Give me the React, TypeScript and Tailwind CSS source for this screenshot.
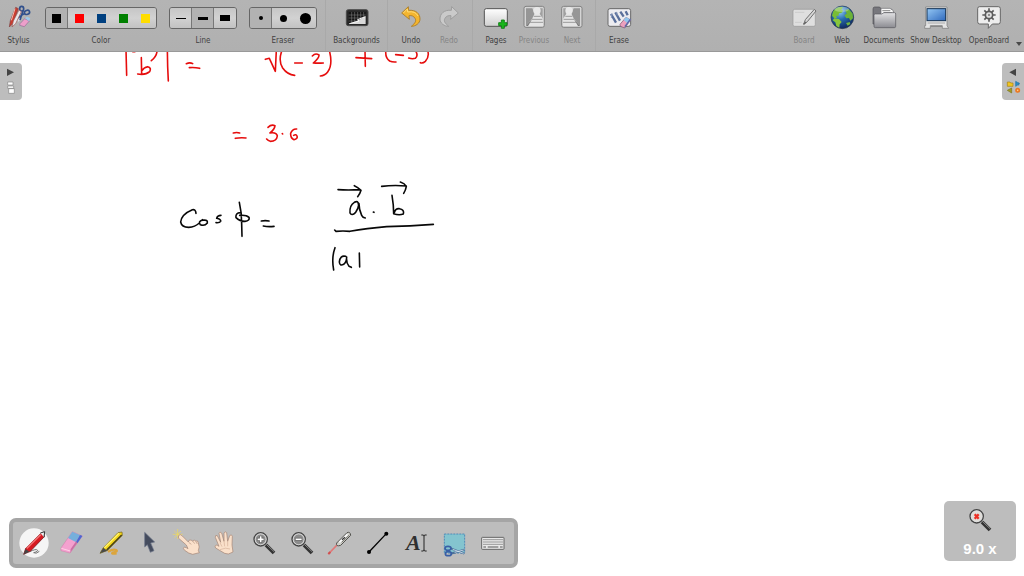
import type { ReactNode } from "react";

type ToolProps = { label: string; width: string; dim?: boolean; children: ReactNode };

/* Toolbar button: drawing on top, caption below */
function Tool({ label, width, dim, children }: ToolProps) {
  return (
    <button
      type="button"
      disabled={dim}
      className={`flex h-full shrink-0 flex-col items-center pt-1 ${width} ${dim ? "text-[#858585]" : "text-[#414141]"}`}
    >
      {children}
      <Caption>{label}</Caption>
    </button>
  );
}

function Caption({ children }: { children: ReactNode }) {
  return <span className="mt-[5px] text-[8px] leading-3 whitespace-nowrap">{children}</span>;
}

/* Toolbar drawings use three units per pixel */
function TopIcon({ children, dim }: { children: ReactNode; dim?: boolean }) {
  return (
    <svg aria-hidden="true" viewBox="0 0 90 78" className={`h-[26px] w-[30px] shrink-0 ${dim ? "opacity-70" : ""}`}>
      {children}
    </svg>
  );
}

function Choices({ label, items, active }: { label: string; active: number; items: { name: string; mark: ReactNode }[] }) {
  return (
    <div role="group" aria-label={label} className="flex h-full shrink-0 flex-col items-center pt-[7px] text-[#414141]">
      <div className="flex h-[22px] overflow-hidden rounded-[3px] border border-[#666]">
        {items.map((item, i) => (
          <button
            key={item.name}
            type="button"
            aria-label={item.name}
            aria-pressed={i === active}
            className={`flex w-[22px] items-center justify-center ${
              i === active ? "bg-[#b2b2b2]" : "bg-linear-to-b from-[#c6c6c6] via-[#d2d2d2] to-[#c2c2c2]"
            } ${i === active || i === active - 1 ? "border-r border-[#777]" : ""}`}
          >
            {item.mark}
          </button>
        ))}
      </div>
      <span className="mt-[6px] text-[8px] leading-3">{label}</span>
    </div>
  );
}

function Separator() {
  return <div className="h-full w-px shrink-0 bg-[#a9a9a9]" />;
}

const colors = [
  { name: "Black", mark: <span className="size-[9px] bg-black" /> },
  { name: "Red", mark: <span className="size-[9px] bg-[#ff0000]" /> },
  { name: "Blue", mark: <span className="size-[9px] bg-[#004080]" /> },
  { name: "Green", mark: <span className="size-[9px] bg-[#008000]" /> },
  { name: "Yellow", mark: <span className="size-[9px] bg-[#ffdd00]" /> },
];
const lines = [
  { name: "Fine line", mark: <span className="h-px w-[10px] bg-black" /> },
  { name: "Medium line", mark: <span className="h-[3px] w-[10px] bg-black" /> },
  { name: "Strong line", mark: <span className="h-[6px] w-[10px] bg-black" /> },
];
const erasers = [
  { name: "Small eraser", mark: <span className="size-1 rounded-full bg-black" /> },
  { name: "Medium eraser", mark: <span className="size-[7px] rounded-full bg-black" /> },
  { name: "Large eraser", mark: <span className="size-[11px] rounded-full bg-black" /> },
];

function StylusIcon() {
  return (
    <TopIcon>
      <path d="M42 52 L58 26" stroke="#d8dce6" strokeWidth="5" />
      <g fill="none" stroke="#31508c" strokeWidth="5">
        <ellipse cx="53" cy="14" rx="6" ry="7" />
        <ellipse cx="69" cy="25" rx="8" ry="6" transform="rotate(-20 69 25)" />
        <path d="M57 20 L48 48 M62 28 L39 43" />
      </g>
      <path d="M35 10 L43 14 L28 57 L16 69 L19 50Z" fill="#c93d30" stroke="#7d4444" strokeWidth="2" />
      <path d="M33 14 L22 49" stroke="#f5b8ac" strokeWidth="3" />
      <path d="M45 18 L52 23 L35 59 L24 69 L28 51Z" fill="#e9e9ed" stroke="#9b5550" strokeWidth="2" />
      <path d="M48 59 L62 44 L76 51 L61 68 L47 64Z" fill="#ed9fca" stroke="#8f6d96" strokeWidth="2" />
      <path d="M63 43 L69 38 L79 43 L75 52Z" fill="#9cc8ea" />
    </TopIcon>
  );
}

function BackgroundsIcon() {
  return (
    <TopIcon>
      <rect x="13" y="17" width="65" height="48" rx="6" fill="#292929" stroke="#4c4c4c" strokeWidth="3" />
      <rect x="20" y="24" width="51" height="34" fill="#151515" />
      <path d="M20 33H71 M20 42H71 M20 51H71 M29 24V58 M38 24V58 M47 24V58 M56 24V58 M65 24V58" stroke="#8b8b8b" strokeWidth="1.5" />
      <path d="M20 60 L45 51 L71 37 V60Z" fill="#d9d9d9" />
      <path d="M22 59 L51 51 L47 47 L70 38" fill="none" stroke="#f8f8f8" strokeWidth="3" />
    </TopIcon>
  );
}

function TurnIcon({ redo }: { redo?: boolean }) {
  return (
    <TopIcon>
      <path
        transform={redo ? "translate(90 0) scale(-1 1)" : undefined}
        d="M17 27 L37 8 L38 19 C60 17 72 29 72 45 C72 58 59 67 46 67 C57 58 62 51 57 43 C53 36 47 34 39 35 L40 46Z"
        fill={redo ? "#cacaca" : "#f4b52e"}
        stroke={redo ? "#989898" : "#a87924"}
        strokeWidth="2.5"
        strokeLinejoin="round"
      />
      {!redo && <path d="M22 27 L34 15 L35 24 Q58 20 66 36" fill="none" stroke="#ffdc77" strokeWidth="3" />}
    </TopIcon>
  );
}

function PagesIcon() {
  return (
    <TopIcon>
      <defs>
        <linearGradient id="pageFill" x2="0" y2="1">
          <stop stopColor="#fff" />
          <stop offset="1" stopColor="#cfcfcf" />
        </linearGradient>
      </defs>
      <rect x="10" y="14" width="69" height="53" rx="6" fill="url(#pageFill)" stroke="#555" strokeWidth="3" />
      <path d="M61 48 h9 v8 h8 v9 h-8 v8 h-9 v-8 h-8 v-9 h8Z" fill="#18b51b" stroke="#087c0c" strokeWidth="2.5" strokeLinejoin="round" />
    </TopIcon>
  );
}

function StairIcon({ next }: { next?: boolean }) {
  return (
    <TopIcon dim>
      <g transform={next ? "translate(90 0) scale(-1 1)" : undefined}>
        <rect x="15" y="7" width="61" height="63" rx="6" fill="#e4e4e4" stroke="#6e6e6e" strokeWidth="3" />
        <path d="M21 13 H40 L47 29 L39 44 L21 66Z" fill="#8a8a8a" />
        <path d="M21 66 L44 40 L36 55 L31 66Z" fill="#5f5f5f" />
        <path d="M63 13 H71 V43 L62 30Z" fill="#999" />
        <path d="M48 28 L62 30 L72 47 V66 H27 L41 43Z" fill="#fafafa" />
        <circle cx="54" cy="20" r="11" fill="#fff" />
        <path d="M44 37H65 M39 46H70 M33 55H72" stroke="#929292" strokeWidth="3" />
      </g>
    </TopIcon>
  );
}

function EraseIcon() {
  return (
    <TopIcon>
      <rect x="12" y="14" width="68" height="53" rx="6" fill="#ececf0" stroke="#686868" strokeWidth="3" />
      <path d="M21 30 L36 56 M34 25 L48 50 M49 23 L59 38 M65 22 L71 34" stroke="#596f9b" strokeWidth="7" />
      <path d="M24 28 L22 42 M38 24 L40 34" stroke="#899abb" strokeWidth="3" />
      <path d="M48 61 L66 40 L80 48 L62 72 L49 67Z" fill="#eca0bd" stroke="#79506f" strokeWidth="2" />
      <path d="M59 48 L66 39 L80 47 L72 59Z" fill="#91c6ed" />
      <path d="M80 48 L62 72 V65 L79 43Z" fill="#5965a9" />
    </TopIcon>
  );
}

function BoardIcon() {
  return (
    <TopIcon dim>
      <rect x="12" y="16" width="67" height="51" rx="5" fill="#f2f2f2" stroke="#8c8c8c" strokeWidth="2" />
      <path d="M18 25H46 M18 55H38" stroke="#d8d8d8" strokeWidth="3" />
      <path d="M44 61 L49 47 L76 16 L81 21 L55 53Z" fill="#e5e5e5" stroke="#555" strokeWidth="3" />
      <path d="M44 61 L51 54" stroke="#444" strokeWidth="4" />
    </TopIcon>
  );
}

function WebIcon() {
  return (
    <TopIcon>
      <defs>
        <radialGradient id="sea" cx="40%" cy="25%" r="75%">
          <stop stopColor="#90cbed" />
          <stop offset=".45" stopColor="#286db0" />
          <stop offset="1" stopColor="#10295f" />
        </radialGradient>
      </defs>
      <circle cx="46" cy="40" r="34" fill="url(#sea)" stroke="#29394c" strokeWidth="2" />
      <path d="M19 22 C27 9 40 8 48 10 L43 17 L49 20 L43 27 L36 28 L34 36 L27 35 L30 42 L22 43 L15 35Z" fill="#79bd35" />
      <path d="M22 43 L36 45 L44 54 L38 61 L37 71 L28 66 L25 55 L17 49Z" fill="#88c63b" />
      <path d="M55 18 L65 15 L77 29 L78 43 L70 50 L66 42 L58 43 L52 34 L59 29Z" fill="#6cb338" />
      <path d="M57 57 L68 54 L70 60 L62 65Z" fill="#70b640" />
      <ellipse cx="44" cy="16" rx="22" ry="8" fill="white" opacity=".3" />
    </TopIcon>
  );
}

function DocumentsIcon() {
  return (
    <TopIcon>
      <defs>
        <linearGradient id="folder" x2="0" y2="1">
          <stop stopColor="#e2e2e4" />
          <stop offset="1" stopColor="#8b8b91" />
        </linearGradient>
      </defs>
      <path d="M12 15 Q12 9 17 9 H32 L38 16 H68 V60 H12Z" fill="#77777d" stroke="#4f4f55" strokeWidth="2" />
      <path d="M36 13 H63 L73 20 V49 H36Z" fill="#fafafa" stroke="#69696e" strokeWidth="2" />
      <path d="M40 20H64 M44 26H70" stroke="#888" strokeWidth="3" />
      <path d="M15 34 Q15 30 19 30 H38 L45 26 H77 Q80 26 80 30 V67 Q80 71 76 71 H19 Q15 71 15 67Z" fill="url(#folder)" stroke="#55555b" strokeWidth="2" />
    </TopIcon>
  );
}

function DesktopIcon() {
  return (
    <TopIcon>
      <defs>
        <linearGradient id="screen" x2="1" y2="1">
          <stop stopColor="#94c7f4" />
          <stop offset="1" stopColor="#2f69bd" />
        </linearGradient>
      </defs>
      <path d="M14 9 H78 V65 L83 73 H64 V65 H28 V73 H11 V65 H14Z" fill="#e4e4e4" stroke="#777" strokeWidth="2" />
      <rect x="18" y="14" width="56" height="36" fill="url(#screen)" stroke="#143253" strokeWidth="3" />
      <path d="M20 57H72" stroke="#aaa" strokeWidth="3" />
      <path d="M29 67H63" stroke="#888" strokeWidth="4" />
    </TopIcon>
  );
}

function OpenBoardIcon() {
  return (
    <TopIcon>
      <path d="M17 8 H73 Q79 8 79 14 V53 Q79 60 73 60 H55 L43 73 V60 H17 Q11 60 11 53 V14 Q11 8 17 8Z" fill="#ededed" stroke="#666" strokeWidth="3" />
      <g stroke="#5b5b5b" strokeWidth="5">
        <path d="M45 13V22 M45 44V53 M25 33H34 M56 33H65 M31 19L37 25 M53 41L59 47 M31 47L37 41 M53 25L59 19" />
        <circle cx="45" cy="33" r="11" fill="#dedede" strokeWidth="5" />
      </g>
      <circle cx="45" cy="33" r="3" fill="#777" />
    </TopIcon>
  );
}

function Magnifier({ sign }: { sign: "in" | "out" | "reset" }) {
  return (
    <>
      <path d="M51 51 L75 75" stroke="#333" strokeWidth="11" strokeLinecap="butt" />
      <path d="M53 50 L75 71" stroke="#888" strokeWidth="3" />
      <circle cx="35" cy="34" r="20" fill="#cfcfcf" stroke="#444" strokeWidth="4" />
      <circle cx="35" cy="34" r="16" fill={sign === "reset" ? "#e1ded9" : "#8c8c8c"} stroke="#e3e3e3" strokeWidth="2" />
      {sign === "reset" ? (
        <path d="M29 28 L41 41 M41 28 L29 41" stroke="#ed2f24" strokeWidth="7" />
      ) : (
        <>
          <path d={sign === "in" ? "M25 34H45 M35 24V44" : "M25 34H45"} stroke="#555" strokeWidth="9" />
          <path d={sign === "in" ? "M26 34H44 M35 25V43" : "M26 34H44"} stroke="#fff" strokeWidth="5" />
        </>
      )}
    </>
  );
}

const hand = {
  fill: "#fae0ca",
  stroke: "#a48473",
  strokeWidth: 2,
  strokeLinejoin: "round" as const,
};

const palette: { name: string; art: ReactNode }[] = [
  {
    name: "Pen",
    art: (
      <>
        <circle cx="45" cy="45" r="44" fill="#f5f5f5" />
        <path d="M32 71 Q51 62 55 66 T44 74 Q51 79 61 70" fill="none" stroke="#737373" strokeWidth="3" />
        <path d="M20 61 L64 17 L74 14 L76 26 L34 70 L14 79Z" fill="#d71920" stroke="#671016" strokeWidth="2" />
        <path d="M23 61 L65 20" stroke="#f06f70" strokeWidth="5" />
        <path d="M31 71 L14 79 L20 63Z" fill="#454545" />
        <path d="M64 15 L77 11 L75 28" fill="#eee" stroke="#333" strokeWidth="3" />
      </>
    ),
  },
  {
    name: "Eraser",
    art: (
      <>
        <path d="M12 60 L46 11 L76 24 L39 75 L12 68Z" fill="#f4a1cf" stroke="#d079a8" strokeWidth="1.5" />
        <path d="M33 30 L46 11 L76 24 L62 45Z" fill="#76afdb" />
        <path d="M76 24 L39 75 L41 63 L70 22Z" fill="#ca70a4" />
        <path d="M76 24 L61 46 L58 41 L69 21Z" fill="#4b68d4" />
        <path d="M13 61 L40 69" stroke="#ffd1e7" strokeWidth="3" />
      </>
    ),
  },
  {
    name: "Highlighter",
    art: (
      <>
        <path d="M36 71 Q52 62 60 66 T50 74 Q44 79 62 76" fill="none" stroke="#dca53c" strokeWidth="7" />
        <path d="M22 59 L66 14 L78 12 L79 22 L35 67 L12 76Z" fill="#f3d51a" stroke="#716013" strokeWidth="2" />
        <path d="M25 59 L69 16" stroke="#fff36e" strokeWidth="4" />
        <path d="M32 66 L77 21" stroke="#433c19" strokeWidth="4" />
        <path d="M22 59 L34 68 L12 76Z" fill="#494949" />
      </>
    ),
  },
  {
    name: "Select",
    art: <path d="M32 13 L62 42 L50 45 L60 68 L49 73 L40 50 L32 57Z" fill="#454c5e" stroke="#70798c" strokeWidth="2" />,
  },
  {
    name: "Interact",
    art: (
      <>
        <path d="M17 3V33 M2 19H32 M7 9L27 29 M27 9L7 29" stroke="#f0db57" strokeWidth="2" />
        <path
          {...hand}
          d="M20 23 Q24 16 31 24 L49 42 Q50 34 57 36 L62 39 Q66 33 71 39 Q78 36 79 45 Q84 57 79 68 L82 74 L62 79 Q50 77 38 67 Q31 61 37 57 Q44 59 48 62 L43 51 L19 30Z"
        />
        <path d="M50 43L58 49 M62 39L68 47 M71 40L76 48" stroke="#b69684" strokeWidth="2" />
      </>
    ),
  },
  {
    name: "Scroll page",
    art: (
      <>
        <path
          {...hand}
          d="M27 55 L16 28 Q16 19 22 23 L32 43 L27 16 Q29 9 35 15 L42 40 L42 15 Q45 8 50 14 L53 40 L59 23 Q65 17 67 25 L66 51 L69 72 L55 78 L44 76 L17 60 Q12 52 21 51Z"
        />
        <path d="M30 44L36 56 M42 40L44 55 M53 40L53 55 M30 65Q48 57 60 63" fill="none" stroke="#d4b199" strokeWidth="2" />
      </>
    ),
  },
  { name: "Zoom in", art: <Magnifier sign="in" /> },
  { name: "Zoom out", art: <Magnifier sign="out" /> },
  {
    name: "Laser pointer",
    art: (
      <>
        <path d="M10 78 L40 47" stroke="#e17878" strokeWidth="5" />
        <path d="M10 78 L16 72" stroke="#d05050" strokeWidth="6" />
        <path d="M35 45 L66 14 Q76 10 77 22 L47 52 Q32 57 35 45Z" fill="#d0d0ca" stroke="#51514d" strokeWidth="3" />
        <path d="M43 43 L67 19" stroke="#fafafa" strokeWidth="5" />
        <path d="M50 43 L73 21" stroke="#71716c" strokeWidth="3" />
        <path d="M51 35 L60 28" stroke="#333" strokeWidth="4" />
      </>
    ),
  },
  {
    name: "Draw line",
    art: (
      <>
        <path d="M18 72 L70 17" stroke="#000" strokeWidth="4" />
        <circle cx="18" cy="72" r="6" />
        <circle cx="70" cy="17" r="6" />
      </>
    ),
  },
  { name: "Write text", art: null },
  {
    name: "Capture part of the screen",
    art: (
      <>
        <rect x="13" y="18" width="61" height="57" fill="#84c4cf" stroke="#3f7fb5" strokeWidth="2.5" strokeDasharray="6 3" />
        <path d="M32 61 L73 77 M32 77 L73 65" stroke="#4b6f97" strokeWidth="6" />
        <path d="M38 64 L71 76 M44 73 L71 66" stroke="#d6e7f2" strokeWidth="2.5" />
        <g fill="none" stroke="#395fa5" strokeWidth="5">
          <ellipse cx="24" cy="61" rx="9" ry="6" />
          <ellipse cx="25" cy="77" rx="9" ry="6" />
        </g>
      </>
    ),
  },
  {
    name: "Virtual keyboard",
    art: (
      <>
        <rect x="11" y="28" width="67" height="36" rx="2" fill="#e8e8e8" stroke="#666" strokeWidth="3" />
        <path d="M16 35H74 M16 42H74 M16 49H74" stroke="#707070" strokeWidth="3" strokeDasharray="4 2" />
        <path d="M16 57H24 M29 57H61 M66 57H74" stroke="#888" strokeWidth="4" />
      </>
    ),
  },
];

/* Pen strokes written on the page */
function Handwriting() {
  return (
    <svg role="img" aria-label="Handwritten vector formula" viewBox="0 52 480 240" className="absolute top-0 left-0 h-[240px] w-[480px]" fill="none" strokeLinecap="round" strokeLinejoin="round">
      <g transform="translate(110 45) scale(.33333)" stroke="#e60d0d" strokeWidth="4.8">
        <path d="M48 14 L50 91 M68 20 L75 20 M94 38 L95 88 M83 87 Q107 91 119 80 Q125 68 113 65 Q101 67 96 77 M141 20 Q139 35 124 47 M172 14 L173 65 L175 108 M229 56 Q240 51 248 56 M238 68 Q252 66 269 70" />
        <path d="M466 43 L478 40 L496 79 L499 16 M516 16 Q504 47 518 69 Q532 89 554 91 M554 54 H577 M607 33 Q616 23 627 30 Q628 39 610 54 Q625 55 640 54 M657 13 Q670 58 653 81 Q645 92 631 93 M738 38 L785 41 M765 16 L766 64 M828 14 Q824 38 839 48 Q847 52 858 51 M857 29 L880 31 M918 20 Q925 33 916 40 Q907 43 896 39 M952 14 Q960 34 946 49 Q938 56 931 53" />
        <path d="M370 264 Q380 261 389 264 M376 280 Q392 277 408 279 M474 247 Q484 237 495 242 Q494 253 480 264 Q500 261 502 273 Q500 289 481 289 Q474 287 470 282 M517 266 L518 267 M560 252 Q547 251 542 265 Q541 280 552 284 Q564 281 561 273 Q558 267 551 271" />
      </g>
      <g transform="translate(170 170) scale(.33333)" stroke="#080808" strokeWidth="4.8">
        <path d="M78 130 Q77 117 67 119 Q34 133 32 156 Q35 172 56 172 Q75 171 88 159 M98 149 Q83 155 91 164 Q104 169 112 159 Q114 148 99 151 M153 136 Q142 136 140 145 Q154 148 152 154 Q149 159 138 158" />
        <path d="M208 97 Q215 126 215 161 L216 199 M211 128 Q196 128 198 143 Q209 154 225 154 Q240 152 237 142 Q229 134 209 136 M274 153 Q286 151 297 153 M280 168 Q295 171 312 169" />
        <path d="M504 59 Q534 61 570 59 M553 47 Q563 51 573 61 Q570 72 563 80 M565 103 Q565 91 553 97 Q538 106 540 129 Q545 139 557 127 Q565 116 567 101 Q567 118 575 136 Q578 143 586 144 M610 126 L612 127 M635 49 Q671 45 709 48 M691 36 Q704 40 709 49 Q707 61 701 70 M666 76 Q671 105 671 131 Q687 137 700 132 Q704 119 688 116 Q676 115 673 128" />
        <path d="M494 180 L498 184 Q519 182 540 184 Q590 175 650 170 Q720 169 790 163 M495 233 Q484 263 491 300 M527 259 Q510 255 508 276 Q509 289 521 283 Q530 276 530 261 Q528 279 537 289 L544 292 M568 249 L569 291" />
      </g>
    </svg>
  );
}

export default function App() {
  return (
    <div className="flex h-screen flex-col overflow-hidden bg-white font-['DejaVu_Sans_Condensed','DejaVu_Sans',sans-serif]">
      <header className="flex h-[52px] shrink-0 justify-between border-b border-[#999] bg-linear-to-b from-[#b4b4b4] to-[#b0b0b0]">
        <div className="flex">
          <Tool label="Stylus" width="w-[37px]"><StylusIcon /></Tool>
          <div className="flex gap-3 px-2">
            <Choices label="Color" items={colors} active={0} />
            <Choices label="Line" items={lines} active={1} />
            <Choices label="Eraser" items={erasers} active={0} />
          </div>
          <Separator />
          <Tool label="Backgrounds" width="w-[61px]"><BackgroundsIcon /></Tool>
          <Separator />
          <div className="flex px-1">
            <Tool label="Undo" width="w-[38px]"><TurnIcon /></Tool>
            <Tool label="Redo" width="w-[38px]" dim><TurnIcon redo /></Tool>
          </div>
          <Separator />
          <div className="flex px-1">
            <Tool label="Pages" width="w-[38px]"><PagesIcon /></Tool>
            <Tool label="Previous" width="w-[38px]" dim><StairIcon /></Tool>
            <Tool label="Next" width="w-[38px]" dim><StairIcon next /></Tool>
          </div>
          <Separator />
          <div className="flex px-1">
            <Tool label="Erase" width="w-[38px]"><EraseIcon /></Tool>
          </div>
        </div>
        <div className="flex">
          <Tool label="Board" width="w-[38px]" dim><BoardIcon /></Tool>
          <Tool label="Web" width="w-[38px]"><WebIcon /></Tool>
          <Tool label="Documents" width="w-[46px]"><DocumentsIcon /></Tool>
          <Tool label="Show Desktop" width="w-[58px]"><DesktopIcon /></Tool>
          <Tool label="OpenBoard" width="w-[48px]"><OpenBoardIcon /></Tool>
          <button type="button" aria-label="More" className="flex w-[11px] items-end justify-center pb-[5px]">
            <svg aria-hidden="true" viewBox="0 0 6 4" className="h-1 w-1.5"><path d="M0 0H6L3 4Z" fill="#484848" /></svg>
          </button>
        </div>
      </header>

      <main className="relative flex min-h-0 flex-1 flex-col justify-between">
        <Handwriting />
        <div className="relative flex justify-between pt-[11px]">
          <button type="button" aria-label="Open page list" className="h-[37px] w-[22px] rounded-r-[4px] bg-[#bdbdbd]">
            <svg aria-hidden="true" viewBox="0 0 66 111" className="h-[37px] w-[22px]">
              <path d="M21 17 L42 28 L21 39Z" fill="#444" />
              <path d="M23 57H39V66H23Z M23 69H41V76H23Z M26 77H43V91H26Z" fill="#fff" stroke="#858585" strokeWidth="2" />
            </svg>
          </button>
          <button type="button" aria-label="Open library" className="h-[37px] w-[22px] rounded-l-[4px] bg-[#bdbdbd]">
            <svg aria-hidden="true" viewBox="0 0 66 111" className="h-[37px] w-[22px]">
              <path d="M42 17 L22 28 L42 39Z" fill="#444" />
              <path d="M16 57H24L26 60H33V70H16Z" fill="#f0c51f" stroke="#a68216" strokeWidth="2" />
              <path d="M41 55 L53 62 L41 70Z M50 58V68" fill="#2c8bc2" stroke="#2379aa" strokeWidth="2" />
              <path d="M29 75V90L16 82Z" fill="#a59b20" stroke="#79751e" strokeWidth="2" />
              <circle cx="47" cy="82" r="5" fill="#ffd18c" stroke="#eb7923" strokeWidth="5" />
            </svg>
          </button>
        </div>

        <div className="relative flex items-end justify-between pr-2 pb-2 pl-[9px]">
          <div role="toolbar" aria-label="Drawing tools" className="flex h-[50px] w-[509px] items-center rounded-[7px] border-4 border-[#a5a5a5] bg-[#bdbdbd] px-0.5">
            {palette.map((tool, i) => (
              <button key={tool.name} type="button" aria-label={tool.name} aria-pressed={i === 0} className="flex h-full flex-1 items-center justify-center">
                {tool.art ? (
                  <svg aria-hidden="true" viewBox="0 0 90 90" className="size-[30px]">{tool.art}</svg>
                ) : (
                  <span className="flex items-center font-['Liberation_Serif',serif] text-[22px] leading-6 font-bold text-[#303030] italic">
                    A
                    <svg aria-hidden="true" viewBox="0 0 18 54" className="h-[18px] w-1.5" fill="none" stroke="#222" strokeWidth="3">
                      <path d="M1 3H6Q9 3 9 7V47Q9 51 6 51H1 M17 3H12Q9 3 9 7 M9 47Q9 51 12 51H17" />
                    </svg>
                  </span>
                )}
              </button>
            ))}
          </div>
          <button type="button" aria-label="Reset zoom, 9.0 x" className="mb-[7px] flex h-[60px] w-[72px] flex-col items-center rounded-[5px] bg-[#bdbdbd] pt-1 text-white">
            <svg aria-hidden="true" viewBox="0 0 90 90" className="size-[30px]"><Magnifier sign="reset" /></svg>
            <span className="mt-[5px] font-['Liberation_Sans',sans-serif] text-[15px] leading-[18px] font-bold">9.0 x</span>
          </button>
        </div>
      </main>
    </div>
  );
}
